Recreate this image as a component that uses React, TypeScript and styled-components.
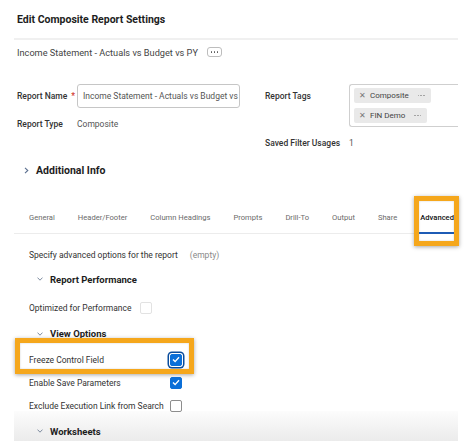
import { FC, ReactElement } from "react";
import styled, { createGlobalStyle, css } from "styled-components";

const GlobalStyle = createGlobalStyle`
  html, body {
    margin: 0;
    padding: 0;
    background: #fff;
  }
  body {
    font-family: Roboto, "Noto Sans", sans-serif;
    color: #333;
    width: 474px;
    height: 441px;
    overflow: hidden;
  }
`;

const ORANGE = "#f5a71c";
const BLUE = "#0b6fd8";

const Page = styled.div`
  width: 474px;
  height: 441px;
  overflow: hidden;
  padding: 0 16px 0 14px;
  box-sizing: border-box;
`;

const Header = styled.div`
  height: 38px;
  display: flex;
  align-items: center;
  padding-left: 3px;
  font-size: 10.5px;
  font-weight: 700;
  color: #1d1d1d;
  border-bottom: 2px solid #f0f0f0;
`;

const SubTitle = styled.div`
  height: 24px;
  display: flex;
  align-items: center;
  gap: 9px;
  padding-left: 3px;
  font-size: 9.2px;
  color: #444;
`;

const DotsButton = styled.span`
  display: inline-flex;
  align-items: center;
  justify-content: center;
  gap: 1.5px;
  width: 13px;
  height: 8px;
  border: 1px solid #bdbdbd;
  border-radius: 3px;
`;

const Dot = styled.span<{ $color: string }>`
  width: 1.5px;
  height: 1.5px;
  border-radius: 50%;
  background: ${(p) => p.$color};
`;

const ChipDots = styled.span`
  display: inline-flex;
  align-items: center;
  gap: 1.2px;
  margin-left: 5px;
`;

const Form = styled.div`
  margin-top: 20px;
  padding-left: 3px;
  display: flex;
  align-items: flex-start;
  gap: 25px;
`;

const FieldGrid = styled.div<{ $labelWidth: number }>`
  display: grid;
  grid-template-columns: ${(p) => p.$labelWidth}px auto;
  row-gap: 8px;
  align-items: center;
  align-content: start;
`;

const Label = styled.div<{ $top?: boolean }>`
  font-size: 8.5px;
  font-weight: 500;
  color: #333;
  line-height: 16px;
  white-space: nowrap;
  ${(p) =>
    p.$top &&
    css`
      align-self: start;
      margin-top: 4px;
    `}
`;

const Required = styled.span`
  color: #d0342c;
  margin-left: 4px;
`;

const Value = styled.div`
  font-size: 8.5px;
  color: #555;
  line-height: 16px;
`;

const TextInput = styled.div`
  width: 163px;
  height: 24px;
  box-sizing: border-box;
  border: 1px solid #c6c6c6;
  border-radius: 3px;
  padding: 0 5px;
  display: flex;
  align-items: center;
  font-size: 8.5px;
  color: #555;
  white-space: nowrap;
  overflow: hidden;
`;

const TagBox = styled.div`
  width: 109px;
  height: 43px;
  box-sizing: border-box;
  border: 1px solid #cfcfcf;
  border-right: none;
  border-radius: 3px 0 0 3px;
  padding: 3px 4px;
  display: flex;
  flex-direction: column;
  align-items: flex-start;
  gap: 5px;
`;

const Chip = styled.span`
  height: 15px;
  display: inline-flex;
  align-items: center;
  gap: 4px;
  padding: 0 6px 0 5px;
  background: #e9e9e9;
  border-radius: 2px;
  font-size: 8px;
  color: #444;
`;

const ChipX = styled.span`
  color: #777;
  font-size: 8px;
`;

const SectionToggle = styled.div<{ $indent: number; $size: number }>`
  display: flex;
  align-items: center;
  gap: 7px;
  padding-left: ${(p) => p.$indent}px;
  height: 18px;
  font-size: ${(p) => p.$size}px;
  font-weight: 700;
  color: #1d1d1d;
`;

const TabBar = styled.div`
  margin-top: 22px;
  height: 32px;
  display: flex;
  align-items: stretch;
  gap: 23px;
  padding-left: 15px;
  border-bottom: 1px solid #ececec;
`;

const Tab = styled.div<{ $active?: boolean }>`
  position: relative;
  display: flex;
  align-items: center;
  font-size: 7.6px;
  color: #6a6a6a;
  white-space: nowrap;
  ${(p) =>
    p.$active &&
    css`
      color: #111;
      font-weight: 500;
      &::after {
        content: "";
        position: absolute;
        left: -1px;
        right: 0;
        bottom: -1px;
        height: 2.5px;
        background: #1d5bb5;
      }
    `}
`;

const Highlight = styled.span<{ $t: number; $r: number; $b: number; $l: number }>`
  position: absolute;
  top: ${(p) => p.$t}px;
  right: ${(p) => p.$r}px;
  bottom: ${(p) => p.$b}px;
  left: ${(p) => p.$l}px;
  border: 5px solid ${ORANGE};
  box-shadow: 0 1px 4px rgba(0, 0, 0, 0.35), inset 0 0 2px rgba(0, 0, 0, 0.2);
  pointer-events: none;
`;

const Intro = styled.div`
  margin-top: 14px;
  padding-left: 15px;
  height: 14px;
  display: flex;
  align-items: center;
  gap: 12px;
  font-size: 8.5px;
  color: #333;
`;

const Muted = styled.span`
  color: #8a8a8a;
`;

const OptionGroup = styled.div<{ $gap: number }>`
  margin-top: ${(p) => p.$gap}px;
  padding-left: 15px;
  display: flex;
  flex-direction: column;
`;

const OptionRow = styled.div<{ $labelWidth: number }>`
  position: relative;
  height: 23px;
  display: grid;
  grid-template-columns: ${(p) => p.$labelWidth}px 12px;
  align-items: center;
  width: max-content;
  font-size: 8.5px;
  color: #333;
  white-space: nowrap;
`;

const Box = styled.span<{ $state: "off" | "disabled" | "on" | "focus" }>`
  width: 12px;
  height: 12px;
  box-sizing: border-box;
  border-radius: 2px;
  display: flex;
  align-items: center;
  justify-content: center;
  border: 1px solid #8d8d8d;
  background: #fff;
  ${(p) =>
    p.$state === "disabled" &&
    css`
      border-color: #e2e2e2;
    `}
  ${(p) =>
    (p.$state === "on" || p.$state === "focus") &&
    css`
      border-color: ${BLUE};
      background: ${BLUE};
    `}
  ${(p) =>
    p.$state === "focus" &&
    css`
      box-shadow: 0 0 0 1px #fff, 0 0 0 2.5px #0a4c9c;
    `}
`;

const Band = styled.div`
  margin-top: -6px;
  width: 444px;
  height: 42px;
  box-sizing: border-box;
  padding-top: 11px;
  background: linear-gradient(to bottom, #fcfcfc, #e4e4e4);
`;

const ChevronRight = () => (
  <svg width="5" height="7" viewBox="0 0 5 7">
    <polyline points="1,0.8 3.8,3.5 1,6.2" fill="none" stroke="#5b6f8f" strokeWidth="1.1" />
  </svg>
);

const ChevronDown = () => (
  <svg width="6" height="4" viewBox="0 0 6 4">
    <polyline points="0.5,0.6 3,3.2 5.5,0.6" fill="none" stroke="#6f7f95" strokeWidth="0.9" />
  </svg>
);

const Check = () => (
  <svg width="8" height="7" viewBox="0 0 8 7">
    <polyline points="1,3.6 3.1,5.6 7,1.2" fill="none" stroke="#fff" strokeWidth="1.4" />
  </svg>
);

const Checkbox: FC<{ state: "off" | "disabled" | "on" | "focus" }> = ({ state }) => (
  <Box $state={state}>{(state === "on" || state === "focus") && <Check />}</Box>
);

const Dots: FC<{ color: string }> = ({ color }) => (
  <>
    <Dot $color={color} />
    <Dot $color={color} />
    <Dot $color={color} />
  </>
);

const tabs = ["General", "Header/Footer", "Column Headings", "Prompts", "Drill-To", "Output", "Share"];

export const App: FC = (): ReactElement => {
  return (
    <Page>
      <GlobalStyle />
      <Header>Edit Composite Report Settings</Header>
      <SubTitle>
        Income Statement - Actuals vs Budget vs PY
        <DotsButton>
          <Dots color="#555" />
        </DotsButton>
      </SubTitle>

      <Form>
        <FieldGrid $labelWidth={60}>
          <Label>
            Report Name<Required>*</Required>
          </Label>
          <TextInput>Income Statement - Actuals vs Budget vs PY</TextInput>
          <Label>Report Type</Label>
          <Value>Composite</Value>
        </FieldGrid>
        <FieldGrid $labelWidth={84}>
          <Label $top>Report Tags</Label>
          <TagBox>
            <Chip>
              <ChipX>✕</ChipX>Composite
              <ChipDots>
                <Dots color="#9a9a9a" />
              </ChipDots>
            </Chip>
            <Chip>
              <ChipX>✕</ChipX>FIN Demo
              <ChipDots>
                <Dots color="#9a9a9a" />
              </ChipDots>
            </Chip>
          </TagBox>
          <Label>Saved Filter Usages</Label>
          <Value>1</Value>
        </FieldGrid>
      </Form>

      <SectionToggle $indent={10} $size={10.5} style={{ marginTop: 10 }}>
        <ChevronRight />
        Additional Info
      </SectionToggle>

      <TabBar>
        {tabs.map((t) => (
          <Tab key={t}>{t}</Tab>
        ))}
        <Tab $active>
          Advanced
          <Highlight $t={-5} $r={-5} $b={-13} $l={-6} />
        </Tab>
      </TabBar>

      <Intro>
        Specify advanced options for the report
        <Muted>(empty)</Muted>
      </Intro>

      <SectionToggle $indent={23} $size={9.5} style={{ marginTop: 8 }}>
        <ChevronDown />
        Report Performance
      </SectionToggle>
      <OptionGroup $gap={8}>
        <OptionRow $labelWidth={111}>
          Optimized for Performance
          <Checkbox state="disabled" />
        </OptionRow>
      </OptionGroup>

      <SectionToggle $indent={23} $size={9.5} style={{ marginTop: 5.5 }}>
        <ChevronDown />
        View Options
      </SectionToggle>
      <OptionGroup $gap={5.5}>
        <OptionRow $labelWidth={141}>
          Freeze Control Field
          <Checkbox state="focus" />
          <Highlight $t={-10} $r={-12} $b={-3} $l={-14} />
        </OptionRow>
        <OptionRow $labelWidth={141}>
          Enable Save Parameters
          <Checkbox state="on" />
        </OptionRow>
        <OptionRow $labelWidth={141}>
          Exclude Execution Link from Search
          <Checkbox state="off" />
        </OptionRow>
      </OptionGroup>

      <Band>
        <SectionToggle $indent={23} $size={9.5}>
          <ChevronDown />
          Worksheets
        </SectionToggle>
      </Band>
    </Page>
  );
};

export default App;
